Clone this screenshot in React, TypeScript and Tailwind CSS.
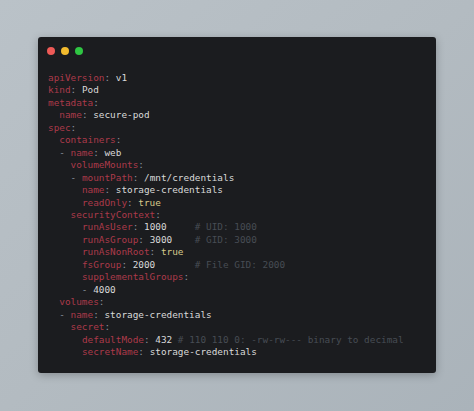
import React from "react";

type Tok = [string, string];

const K = "text-[#ab3a4a]";
const P = "text-[#8a929c]";
const V = "text-[#d9d9d9]";
const B = "text-[#d6c98a]";
const C = "text-[#474c54]";

const lines: Tok[][] = [
  [[K, "apiVersion"], [P, ": "], [V, "v1"]],
  [[K, "kind"], [P, ": "], [V, "Pod"]],
  [[K, "metadata"], [P, ":"]],
  [[V, "  "], [K, "name"], [P, ": "], [V, "secure-pod"]],
  [[K, "spec"], [P, ":"]],
  [[V, "  "], [K, "containers"], [P, ":"]],
  [[P, "  - "], [K, "name"], [P, ": "], [V, "web"]],
  [[V, "    "], [K, "volumeMounts"], [P, ":"]],
  [[P, "    - "], [K, "mountPath"], [P, ": "], [V, "/mnt/credentials"]],
  [[V, "      "], [K, "name"], [P, ": "], [V, "storage-credentials"]],
  [[V, "      "], [K, "readOnly"], [P, ": "], [B, "true"]],
  [[V, "    "], [K, "securityContext"], [P, ":"]],
  [[V, "      "], [K, "runAsUser"], [P, ": "], [V, "1000     "], [C, "# UID: 1000"]],
  [[V, "      "], [K, "runAsGroup"], [P, ": "], [V, "3000    "], [C, "# GID: 3000"]],
  [[V, "      "], [K, "runAsNonRoot"], [P, ": "], [B, "true"]],
  [[V, "      "], [K, "fsGroup"], [P, ": "], [V, "2000       "], [C, "# File GID: 2000"]],
  [[V, "      "], [K, "supplementalGroups"], [P, ":"]],
  [[P, "      - "], [V, "4000"]],
  [[V, "  "], [K, "volumes"], [P, ":"]],
  [[P, "  - "], [K, "name"], [P, ": "], [V, "storage-credentials"]],
  [[V, "    "], [K, "secret"], [P, ":"]],
  [[V, "      "], [K, "defaultMode"], [P, ": "], [V, "432 "], [C, "# 110 110 0: -rw-rw--- binary to decimal"]],
  [[V, "      "], [K, "secretName"], [P, ": "], [V, "storage-credentials"]],
];

export default function App() {
  return (
    <div className="w-[474px] h-[411px] bg-gradient-to-br from-[#bac2c8] via-[#b3bbc1] to-[#aab3ba] pt-[37px] pl-[38px]">
      <div className="w-[398px] h-[336px] bg-[#1b1c1f] rounded-[3px] shadow-[0_2px_8px_rgba(0,0,0,0.25)] pt-[10px] pl-[9px]">
        <div className="flex gap-[6px]">
          <span className="w-[8px] h-[8px] rounded-full bg-[#ee5a57]" />
          <span className="w-[8px] h-[8px] rounded-full bg-[#f3bb2e]" />
          <span className="w-[8px] h-[8px] rounded-full bg-[#2fc643]" />
        </div>
        <pre
          className="mt-[17px] ml-[1px] text-[9.4px] leading-[12.45px] whitespace-pre font-normal"
          style={{ fontFamily: '"DejaVu Sans Mono", monospace' }}
        >
          {lines.map((l, i) => (
            <div key={i}>
              {l.map(([c, t], j) => (
                <span key={j} className={c}>
                  {t}
                </span>
              ))}
            </div>
          ))}
        </pre>
      </div>
    </div>
  );
}
